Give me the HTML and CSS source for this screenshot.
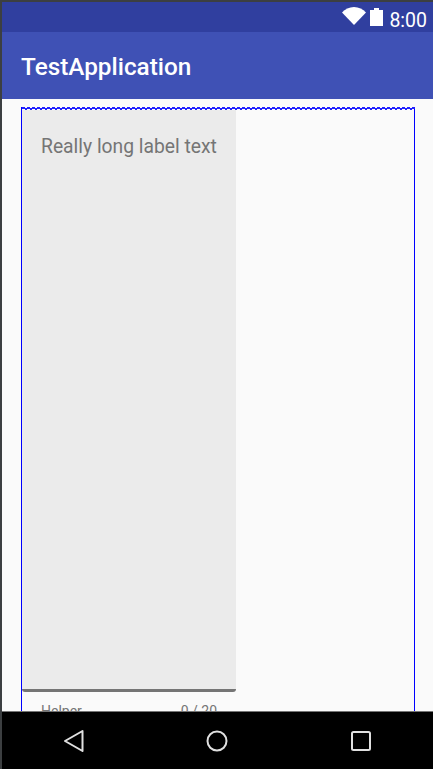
FILE: index.html
```html
<!DOCTYPE html>
<html lang="en">
<head>
    <meta charset="UTF-8">
    <meta name="viewport" content="width=device-width, initial-scale=1.0">
    <title>TestApplication</title>
    <link rel="stylesheet" href="styles.css">
</head>
<body>
    <div class="device">
        <div class="status-bar">
            <svg class="wifi-icon" width="24" height="18" viewBox="0 0 24 18">
                <path d="M0 5.5C3 2.2 7.300 0 12 0s9 2.200 12 5.500L12 18z" fill="#fff"/>
            </svg>
            <svg class="battery-icon" width="13" height="18" viewBox="0 0 13 18">
                <path d="M4 0h5v2h4v16H0V2h4z" fill="#fff"/>
            </svg>
            <span class="clock">8:00</span>
        </div>
        <div class="app-bar">TestApplication</div>
        <div class="content">
            <div class="bounds">
                <div class="bounds-top"></div>
                <div class="text-field">
                    <div class="field-box">Really long label text</div>
                    <div class="field-helper">
                        <span>Helper</span>
                        <span>0 / 20</span>
                    </div>
                </div>
            </div>
        </div>
        <div class="nav-bar">
            <svg width="22" height="24" viewBox="0 0 22 24">
                <path d="M19.500 2L2 12l17.500 10z" fill="none" stroke="#e0e0e0" stroke-width="2" stroke-linejoin="round"/>
            </svg>
            <svg width="22" height="22" viewBox="0 0 22 22">
                <circle cx="11" cy="11" r="9.500" fill="none" stroke="#e0e0e0" stroke-width="2"/>
            </svg>
            <svg width="20" height="20" viewBox="0 0 20 20">
                <rect x="1" y="1" width="18" height="18" rx="1.500" fill="none" stroke="#e0e0e0" stroke-width="2"/>
            </svg>
        </div>
    </div>
</body>
</html>
```

FILE: styles.css
```css
html, body { margin: 0; padding: 0; height: 100%; overflow: hidden; }
body { font-family: Roboto, sans-serif; background: #3c3f41; }

.device { display: flex; flex-direction: column; height: 767px; margin: 2px 0 0 2px; background: #fafafa; overflow: hidden; }

.status-bar { display: flex; align-items: center; justify-content: flex-end; flex: none; height: 30px; padding-right: 6px; background: #303f9f; color: #fff; }
.wifi-icon { margin: -2px 4px 0 0; }
.battery-icon { margin: 0 6px 0 0; }
.clock { font-size: 19.500px; line-height: 30px; margin-top: 8px; }

.app-bar { flex: none; height: 67px; padding-left: 19px; background: #3f51b5; color: #fff; font-size: 24.300px; font-weight: 500; line-height: 69px; }

.content { flex: 1; min-height: 0; padding: 8px 18px 0 19px; overflow: hidden; }
.bounds { height: 640px; border-left: 1px solid #0000ff; border-right: 1px solid #0000ff; }
.bounds-top {
    height: 3px;
    margin-right: -1px;
    background:
        repeating-linear-gradient(90deg, #2020ff 0 3px, transparent 3px 5px) 0 0 / 100% 2px no-repeat,
        repeating-linear-gradient(90deg, transparent 0 3px, #2020ff 3px 5px) 0 100% / 100% 2px no-repeat;
}

.text-field { width: 214px; }
.field-box { height: 582px; padding: 24px 19px 0; box-sizing: border-box; background: #ebebeb; border-bottom: 3px solid #757575; border-radius: 0 0 3px 3px; color: #757575; font-size: 19.300px; line-height: 26px; }
.field-helper { display: flex; justify-content: space-between; padding: 11px 19px 0; color: #757575; font-size: 14px; line-height: 16px; }

.nav-bar { display: grid; grid-template-columns: repeat(3, 1fr); justify-items: center; align-items: center; flex: none; height: 58px; box-sizing: border-box; background: #000; border-top: 1px solid #757575; }
```
